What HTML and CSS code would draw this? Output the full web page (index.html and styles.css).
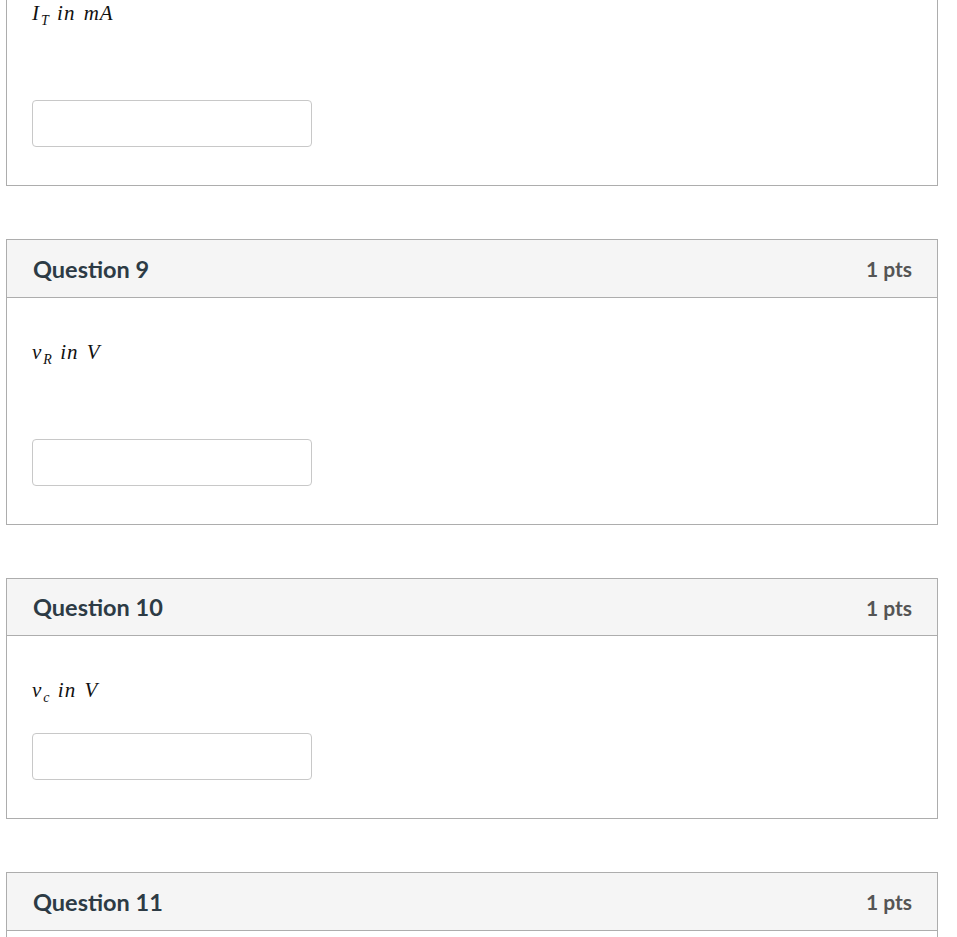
FILE: index.html
```html
<!DOCTYPE html>
<html>
<head>
<meta charset="utf-8">
<link rel="stylesheet" href="styles.css">
</head>
<body>
<div class="quiz">
  <div class="card card-first">
    <div class="card-body">
      <div class="math"><i>I</i><sub>T</sub> <i>in</i> <i>mA</i></div>
      <div class="spacer"></div>
      <input class="answer" type="text">
    </div>
  </div>

  <div class="card">
    <div class="card-header">
      <span class="q-name">Question 9</span>
      <span class="q-pts">1 pts</span>
    </div>
    <div class="card-body">
      <div class="math"><i>v</i><sub>R</sub> <i>in</i> <i>V</i></div>
      <div class="spacer"></div>
      <input class="answer" type="text">
    </div>
  </div>

  <div class="card">
    <div class="card-header card-header-short">
      <span class="q-name">Question 10</span>
      <span class="q-pts">1 pts</span>
    </div>
    <div class="card-body">
      <div class="math"><i>v</i><sub>c</sub> <i>in</i> <i>V</i></div>
      <input class="answer" type="text">
    </div>
  </div>

  <div class="card">
    <div class="card-header">
      <span class="q-name">Question 11</span>
      <span class="q-pts">1 pts</span>
    </div>
    <div class="card-body card-body-empty"></div>
  </div>
</div>
</body>
</html>
```

FILE: styles.css
```css
html, body {
  margin: 0;
  padding: 0;
  background: #ffffff;
  overflow: hidden;
}

.quiz {
  display: flex;
  flex-direction: column;
  gap: 53px;
  padding: 0 19px 0 6px;
}

.card {
  border: 1px solid #adadad;
  background: #ffffff;
}

.card-first {
  margin-top: -42px;
}

.card-header {
  display: flex;
  justify-content: space-between;
  align-items: center;
  height: 57px;
  padding: 0 25px 0 26px;
  background: #f5f5f5;
  border-bottom: 1px solid #adadad;
  font-family: Lato, "Liberation Sans", sans-serif;
  font-weight: 700;
}

.card-header-short {
  height: 56px;
}

.q-name {
  font-size: 23.5px;
  color: #2d3b45;
}

.q-pts {
  font-size: 21px;
  color: #555555;
}

.card-body {
  display: flex;
  flex-direction: column;
  align-items: flex-start;
  padding: 42px 25px 38px 25px;
}

.card-body-empty {
  height: 120px;
}

.math {
  font-family: "Liberation Serif", "DejaVu Serif", serif;
  font-size: 21px;
  line-height: 24px;
  height: 24px;
  color: #111111;
  white-space: nowrap;
  letter-spacing: 1px;
  word-spacing: 2px;
}

.math sub {
  font-size: 14px;
  font-style: italic;
  vertical-align: -5px;
  line-height: 0;
  letter-spacing: 0;
  margin-left: 1px;
}

.spacer {
  height: 44px;
}

.answer {
  box-sizing: border-box;
  width: 280px;
  height: 47px;
  margin: 31px 0 0 0;
  border: 1px solid #c8c8c8;
  border-radius: 4px;
  background: #ffffff;
  padding: 0 8px;
  font-size: 16px;
}
```
